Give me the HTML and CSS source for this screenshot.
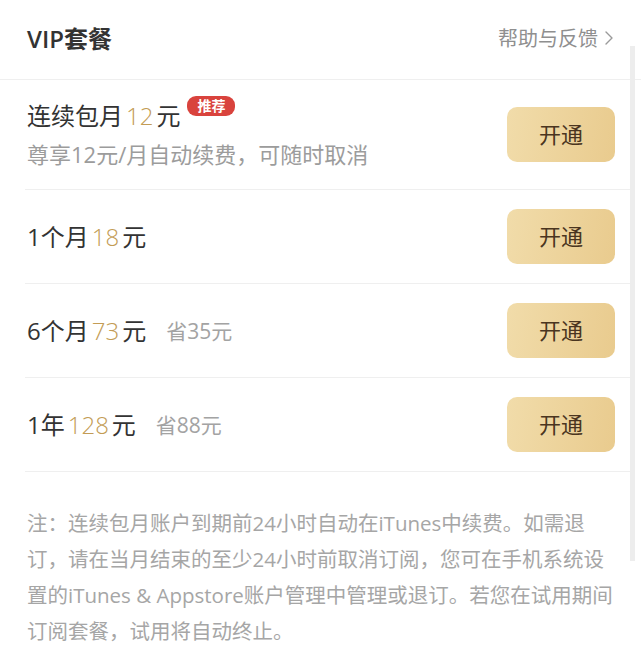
FILE: index.html
```html
<html>
<head>
    <meta charset="utf-8">
    <title>VIP套餐</title>
    <link rel="stylesheet" href="styles.css">
</head>
<body>
    <div class="page">
        <div class="header">
            <div class="header-title">VIP套餐</div>
            <div class="help">
                帮助与反馈
                <svg class="chevron" width="10" height="16" viewBox="0 0 10 16">
                    <polyline points="2,2 8,8 2,14" fill="none" stroke="#9a9a9a" stroke-width="1.4" stroke-linecap="round" stroke-linejoin="round"/>
                </svg>
            </div>
        </div>

        <div class="plans">
            <div class="plan">
                <div class="plan-info">
                    <div class="plan-name">
                        <span>连续包月<em>12</em>元</span>
                        <span class="badge">推荐</span>
                    </div>
                    <div class="plan-desc">尊享12元/月自动续费，可随时取消</div>
                </div>
                <div class="btn">开通</div>
            </div>
            <div class="plan">
                <div class="plan-name">1个月<em>18</em>元</div>
                <div class="btn">开通</div>
            </div>
            <div class="plan">
                <div class="plan-name">6个月<em>73</em>元<span class="save">省35元</span></div>
                <div class="btn">开通</div>
            </div>
            <div class="plan">
                <div class="plan-name">1年<em>128</em>元<span class="save">省88元</span></div>
                <div class="btn">开通</div>
            </div>
        </div>

        <p class="note">
            注：连续包月账户到期前24小时自动在iTunes中续费。如需退<br>
            订，请在当月结束的至少24小时前取消订阅，您可在手机系统设<br>
            置的iTunes &amp; Appstore账户管理中管理或退订。若您在试用期间<br>
            订阅套餐，试用将自动终止。
        </p>

        <!-- 滚动条 -->
        <div class="scroll-track"></div>
    </div>
</body>
</html>
```

FILE: styles.css
```css
* {
    margin: 0;
    padding: 0;
}

body {
    background: #fff;
    font-family: "Open Sans", "Noto Sans CJK SC", sans-serif;
    color: #333;
}

.page {
    width: 641px;
    height: 667px;
    position: relative;
    overflow: hidden;
}

.header {
    height: 80px;
    padding: 0 27px 4px 27px;
    box-sizing: border-box;
    display: flex;
    align-items: center;
    justify-content: space-between;
    border-bottom: 1px solid #efefef;
}

.header-title {
    font-size: 24px;
    font-weight: 600;
    color: #333;
}

.help {
    display: flex;
    align-items: center;
    gap: 6px;
    font-size: 20px;
    color: #8f8f8f;
}

.plans {
    margin: 0 10px 0 25px;
}

.plan {
    display: flex;
    align-items: center;
    justify-content: space-between;
    padding: 19px 16px 19px 2px;
    border-bottom: 1px solid #efefef;
}

.plan-name {
    display: flex;
    align-items: center;
    font-size: 24px;
    line-height: 34px;
    color: #333;
}

.plan-name em {
    font-style: normal;
    font-weight: 300;
    margin: 0 3px;
    color: #c39c55;
}

.badge {
    align-self: flex-start;
    margin: -3px 0 0 7px;
    height: 20px;
    line-height: 20px;
    padding: 0 10px;
    border-radius: 9px;
    background: #d9433d;
    color: #fff;
    font-size: 14px;
    font-weight: 600;
}

.plan-desc {
    margin-top: 5px;
    font-size: 22px;
    line-height: 32px;
    color: #9c9c9c;
}

.save {
    margin-left: 20px;
    font-size: 21px;
    color: #a3a3a3;
}

.btn {
    width: 108px;
    height: 55px;
    line-height: 55px;
    text-align: center;
    border-radius: 10px;
    background: linear-gradient(100deg, #f1dcaa, #e9cb8e);
    color: #4a3520;
    font-size: 22px;
}

.note {
    padding: 33px 8px 0 27px;
    font-size: 20.5px;
    line-height: 36px;
    color: #a6a6a6;
}

.scroll-track {
    position: absolute;
    top: 46px;
    left: 630px;
    width: 5px;
    height: 515px;
    background: #ededed;
}
```
